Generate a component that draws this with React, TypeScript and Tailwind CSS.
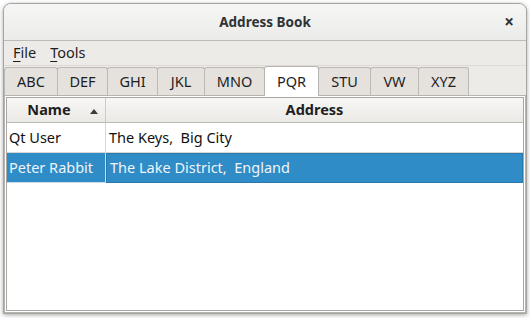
import React from "react";

const tabs = [
  { label: "ABC", w: "w-[54px]" },
  { label: "DEF", w: "w-[51px]" },
  { label: "GHI", w: "w-[51px]" },
  { label: "JKL", w: "w-[48px]" },
  { label: "MNO", w: "w-[61px]" },
  { label: "PQR", w: "w-[55px]" },
  { label: "STU", w: "w-[53px]" },
  { label: "VW", w: "w-[49px]" },
  { label: "XYZ", w: "w-[51px]" },
];

const rows = [
  { name: "Qt User", address: "The Keys,  Big City" },
  { name: "Peter Rabbit", address: "The Lake District,  England" },
];

export default function App() {
  return (
    <div className="w-[530px] h-[318px] bg-white pl-[3px] pt-[3px] pr-[3px] font-['Noto_Sans',sans-serif] text-[#1e1e1e]">
      <div className="h-[311px] flex flex-col rounded-t-[8px] border border-[#a7a5a2] bg-[#edebe8] shadow-[0_1px_4px_rgba(0,0,0,0.35)] overflow-hidden">
        {/* Title bar */}
        <div className="relative h-[37px] shrink-0 flex items-center justify-center bg-gradient-to-b from-[#f6f6f5] to-[#ebebea] border-b border-[#bdbbb8]">
          <span className="text-[13.5px] font-bold text-[#2e3436]">Address Book</span>
          <span className="absolute right-[12px] top-[9px] text-[17px] font-bold text-[#2e3436] leading-none">×</span>
        </div>

        {/* Menu bar */}
        <div className="h-[25px] shrink-0 flex items-center gap-[14px] pl-[9px] text-[14.5px] border-b border-[#dedbd7]">
          <span>
            <span className="underline underline-offset-[3px]">F</span>ile
          </span>
          <span>
            <span className="underline underline-offset-[3px]">T</span>ools
          </span>
        </div>

        {/* Tabs */}
        <div className="flex items-end h-[29px] shrink-0">
          {tabs.map((t, i) =>
            t.label === "PQR" ? (
              <div
                key={t.label}
                className={`${t.w} h-[30px] -mb-[1px] -ml-[1px] z-10 flex items-center justify-center bg-white border border-b-0 border-[#b7b4af] rounded-t-[3px] text-[14.5px]`}
              >
                {t.label}
              </div>
            ) : (
              <div
                key={t.label}
                className={`${t.w} h-[28px] ${i === 0 ? "" : "-ml-[1px]"} flex items-center justify-center bg-[#e5e2de] border border-b-0 border-[#bcb9b4] rounded-t-[3px] text-[14.5px]`}
              >
                {t.label}
              </div>
            )
          )}
        </div>

        {/* Pane */}
        <div className="flex-1 border border-[#b7b4af] p-[1px] bg-white flex">
          <div className="flex-1 border border-[#a9a7a3] bg-white flex flex-col">
            <div className="flex h-[25px] shrink-0 bg-gradient-to-b from-[#f8f7f5] to-[#ebe9e6] border-b border-[#bebcb8] text-[14.5px] font-bold">
              <div className="relative w-[99px] flex items-center justify-center border-r border-[#cfccc8] pr-[14px]">
                Name
                <svg className="absolute right-[7px] top-[11px]" width="8" height="5" viewBox="0 0 8 5">
                  <path d="M0 5 L4 0 L8 5 Z" fill="#3c3c3c" />
                </svg>
              </div>
              <div className="flex-1 flex items-center justify-center">Address</div>
            </div>
            {rows.map((r, i) => {
              const sel = i === 1;
              return (
                <div
                  key={r.name}
                  className={`flex h-[30px] shrink-0 text-[14.5px] ${sel ? "bg-[#308cc6] text-[#eef4fa]" : "bg-white text-[#111]"}`}
                >
                  <div className={`w-[99px] flex items-center pl-[2px] border-r border-b ${sel ? "border-[#cfd9e2]" : "border-[#d8d6d3]"}`}>
                    {r.name}
                  </div>
                  <div
                    className={`flex-1 flex items-center pl-[3px] whitespace-pre ${sel ? "border border-[#2a78ae]" : "border-b border-[#d8d6d3]"}`}
                  >
                    {r.address}
                  </div>
                </div>
              );
            })}
          </div>
        </div>
      </div>
    </div>
  );
}
